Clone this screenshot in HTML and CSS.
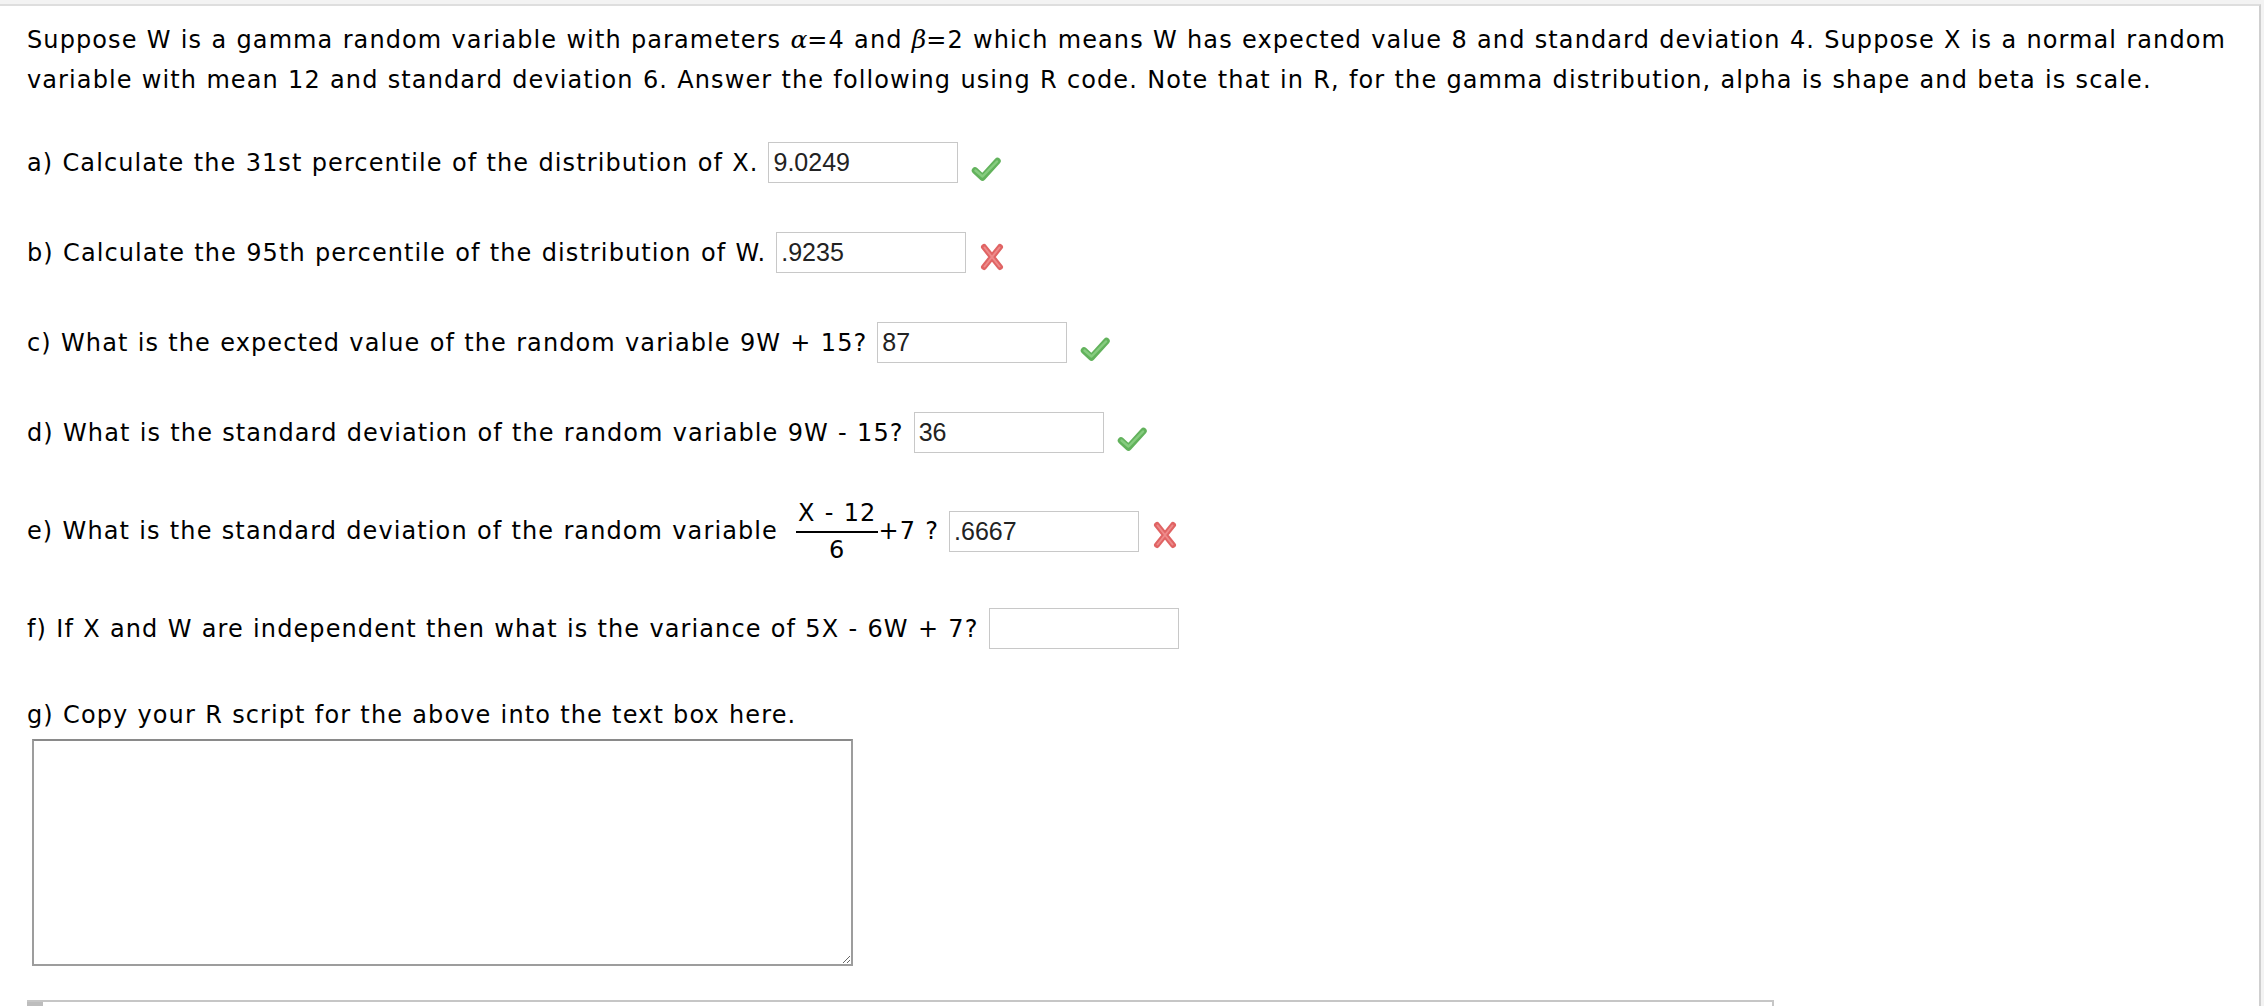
FILE: index.html
```html
<!DOCTYPE html>
<html>
<head>
<meta charset="utf-8">
<link rel="stylesheet" href="styles.css">
</head>
<body>
<div class="panel">
  <p class="intro">Suppose W is a gamma random variable with parameters <span class="m">α</span>=4 and <span class="m">β</span>=2 which means W has expected value 8 and standard deviation 4. Suppose X is a normal random variable with mean 12 and standard deviation 6. Answer the following using R code. Note that in R, for the gamma distribution, alpha is shape and beta is scale.</p>

  <div class="q q-first">
    <span>a) Calculate the 31st percentile of the distribution of X.</span>
    <input class="field" type="text" value="9.0249">
    <svg class="icon ok" width="30" height="26" viewBox="0 0 30 26"><path d="M4 14.5 L11.5 21.5 L26.5 5" fill="none" stroke="#62b25c" stroke-width="6.5" stroke-linecap="round" stroke-linejoin="round"/><path d="M4.5 14.5 L11.5 20.5 L26 5.5" fill="none" stroke="#86cc7f" stroke-width="2.5" stroke-linecap="round" stroke-linejoin="round"/></svg>
  </div>

  <div class="q">
    <span>b) Calculate the 95th percentile of the distribution of W.</span>
    <input class="field" type="text" value=".9235">
    <svg class="icon bad" width="26" height="28" viewBox="0 0 26 28"><path d="M5 4 L21 24 M21 4 L5 24" fill="none" stroke="#e06464" stroke-width="6" stroke-linecap="round"/><path d="M5.5 4.5 L20.5 23.5 M20.5 4.5 L5.5 23.5" fill="none" stroke="#ee8a8a" stroke-width="2" stroke-linecap="round"/></svg>
  </div>

  <div class="q">
    <span>c) What is the expected value of the random variable 9W + 15?</span>
    <input class="field" type="text" value="87">
    <svg class="icon ok" width="30" height="26" viewBox="0 0 30 26"><path d="M4 14.5 L11.5 21.5 L26.5 5" fill="none" stroke="#62b25c" stroke-width="6.5" stroke-linecap="round" stroke-linejoin="round"/><path d="M4.5 14.5 L11.5 20.5 L26 5.5" fill="none" stroke="#86cc7f" stroke-width="2.5" stroke-linecap="round" stroke-linejoin="round"/></svg>
  </div>

  <div class="q">
    <span>d) What is the standard deviation of the random variable 9W - 15?</span>
    <input class="field" type="text" value="36">
    <svg class="icon ok" width="30" height="26" viewBox="0 0 30 26"><path d="M4 14.5 L11.5 21.5 L26.5 5" fill="none" stroke="#62b25c" stroke-width="6.5" stroke-linecap="round" stroke-linejoin="round"/><path d="M4.5 14.5 L11.5 20.5 L26 5.5" fill="none" stroke="#86cc7f" stroke-width="2.5" stroke-linecap="round" stroke-linejoin="round"/></svg>
  </div>

  <div class="q q-frac">
    <span>e) What is the standard deviation of the random variable</span>
    <span class="frac"><span class="num">X - 12</span><span class="den">6</span></span>
    <span class="after">+7 ?</span>
    <input class="field" type="text" value=".6667">
    <svg class="icon bad" width="26" height="28" viewBox="0 0 26 28"><path d="M5 4 L21 24 M21 4 L5 24" fill="none" stroke="#e06464" stroke-width="6" stroke-linecap="round"/><path d="M5.5 4.5 L20.5 23.5 M20.5 4.5 L5.5 23.5" fill="none" stroke="#ee8a8a" stroke-width="2" stroke-linecap="round"/></svg>
  </div>

  <div class="q">
    <span>f) If X and W are independent then what is the variance of 5X - 6W + 7?</span>
    <input class="field" type="text" value="">
  </div>

  <p class="g">g) Copy your R script for the above into the text box here.</p>
  <textarea class="script"></textarea>

  <div class="bottom"></div>
</div>
</body>
</html>
```

FILE: styles.css
```css
html, body {
  margin: 0;
  padding: 0;
}
body {
  background: #f3f3f3;
  font-family: "DejaVu Sans", Verdana, sans-serif;
  font-size: 24px;
  letter-spacing: 1.1px;
  word-spacing: 0.5px;
  color: #000;
  overflow: hidden;
}
.panel {
  margin-top: 4px;
  width: 2261px;
  min-height: 1010px;
  box-sizing: border-box;
  background: #fff;
  border-top: 2px solid #dedede;
  border-right: 2px solid #cfcfcf;
  padding: 14px 0 0 27px;
}
.intro {
  margin: 0;
  width: 2215px;
  line-height: 40px;
}
.m {
  font-family: "DejaVu Serif", "Liberation Serif", serif;
  font-style: italic;
  font-size: 25px;
  letter-spacing: 0;
}
.q {
  display: flex;
  align-items: center;
  min-height: 41px;
  line-height: 40px;
  margin-top: 49px;
  white-space: nowrap;
}
.q-first {
  margin-top: 42px;
}
.field {
  width: 190px;
  height: 41px;
  box-sizing: border-box;
  margin: 0 0 0 10px;
  border: 1px solid #c8c8c8;
  padding: 0 4px;
  font-family: "Liberation Sans", Arial, sans-serif;
  font-size: 25px;
  letter-spacing: 0;
  word-spacing: 0;
  color: #222;
  background: #fff;
  outline: none;
}
.icon {
  flex: none;
  margin-left: 13px;
}
.icon.ok {
  margin-top: 12px;
}
.icon.bad {
  margin-top: 8px;
}
.q-frac {
  margin-top: 42px;
}
.q-frac + .q {
  margin-top: 41px;
}
.frac {
  display: inline-flex;
  flex-direction: column;
  align-items: stretch;
  margin-left: 18px;
  text-align: center;
}
.num {
  line-height: 36px;
  padding: 0 2px;
  border-bottom: 2px solid #000;
}
.den {
  line-height: 34px;
}
.g {
  margin: 46px 0 0 0;
  line-height: 40px;
}
.script {
  display: block;
  margin: 4px 0 0 5px;
  width: 821px;
  height: 227px;
  box-sizing: border-box;
  border: 2px solid #9d9d9d;
  border-top-color: #8a8a8a;
  background: #fff;
  resize: both;
}
.bottom {
  position: relative;
  margin-top: 34px;
  width: 1747px;
  height: 10px;
  box-sizing: border-box;
  border-top: 2px solid #c6c6c6;
  border-right: 2px solid #c6c6c6;
}
.bottom::before {
  content: "";
  position: absolute;
  left: 0;
  top: 0;
  width: 16px;
  height: 8px;
  background: #bdbdbd;
}
```
